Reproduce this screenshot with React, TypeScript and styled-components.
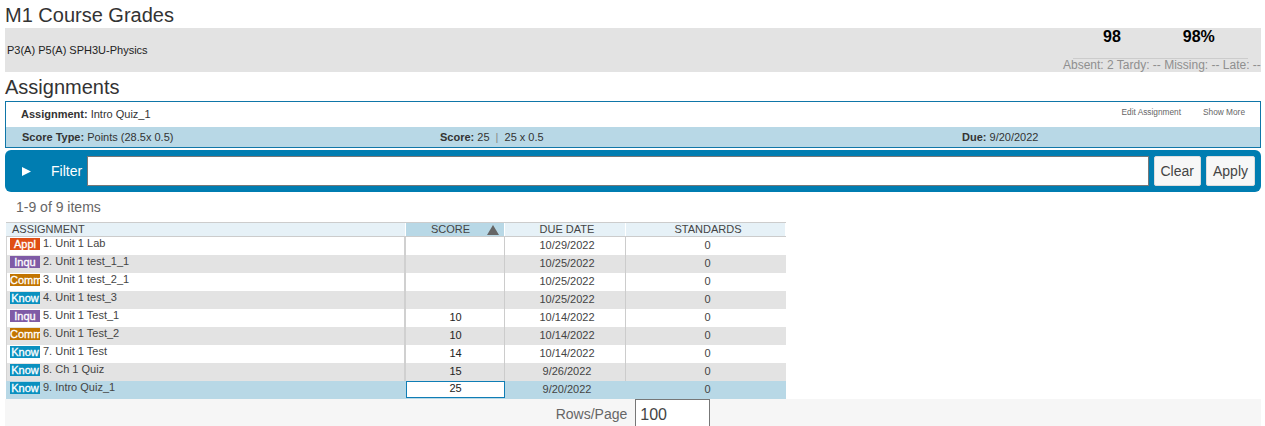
import React from 'react'
import styled, { createGlobalStyle } from 'styled-components'

type Category = 'Appl' | 'Inqu' | 'Comm' | 'Know'

interface Row {
  category: Category
  name: string
  score: string
  due: string
}

const rows: Row[] = [
  { category: 'Appl', name: '1. Unit 1 Lab', score: '', due: '10/29/2022' },
  { category: 'Inqu', name: '2. Unit 1 test_1_1', score: '', due: '10/25/2022' },
  { category: 'Comm', name: '3. Unit 1 test_2_1', score: '', due: '10/25/2022' },
  { category: 'Know', name: '4. Unit 1 test_3', score: '', due: '10/25/2022' },
  { category: 'Inqu', name: '5. Unit 1 Test_1', score: '10', due: '10/14/2022' },
  { category: 'Comm', name: '6. Unit 1 Test_2', score: '10', due: '10/14/2022' },
  { category: 'Know', name: '7. Unit 1 Test', score: '14', due: '10/14/2022' },
  { category: 'Know', name: '8. Ch 1 Quiz', score: '15', due: '9/26/2022' },
  { category: 'Know', name: '9. Intro Quiz_1', score: '25', due: '9/20/2022' }
]

const badgeColors: Record<Category, string> = {
  Appl: '#e04e14',
  Inqu: '#7f5ba6',
  Comm: '#c27400',
  Know: '#0a90bf'
}

const GlobalStyle = createGlobalStyle`
  html, body {
    margin: 0;
    padding: 0;
    background: #fff;
    overflow: hidden;
  }
  body {
    font-family: "Liberation Sans", Arial, sans-serif;
    color: #333;
  }
`

export default function App() {
  return (
    <Page>
      <GlobalStyle />
      <Heading>M1 Course Grades</Heading>
      <CourseBand>
        <CourseName>P3(A) P5(A) SPH3U-Physics</CourseName>
        <CourseGrades>
          <GradeNumbers>
            <span>98</span>
            <span>98%</span>
          </GradeNumbers>
          <Attendance>Absent: 2 Tardy: -- Missing: -- Late: --</Attendance>
        </CourseGrades>
      </CourseBand>
      <SubHeading>Assignments</SubHeading>
      <AssignmentBox>
        <AssignmentTop>
          <span>
            <b>Assignment:</b> Intro Quiz_1
          </span>
          <AssignmentLinks>
            <span>Edit Assignment</span>
            <span>Show More</span>
          </AssignmentLinks>
        </AssignmentTop>
        <AssignmentBottom>
          <span>
            <b>Score Type:</b> Points (28.5x 0.5)
          </span>
          <span>
            <b>Score:</b> 25 <Pipe>|</Pipe> 25 x 0.5
          </span>
          <span>
            <b>Due:</b> 9/20/2022
          </span>
        </AssignmentBottom>
      </AssignmentBox>
      <FilterBar>
        <svg width="9" height="9" viewBox="0 0 9 9">
          <polygon points="0,0 9,4.5 0,9" fill="#fff" />
        </svg>
        <FilterLabel>Filter</FilterLabel>
        <FilterInput type="text" />
        <FilterButton>Clear</FilterButton>
        <FilterButton>Apply</FilterButton>
      </FilterBar>
      <ItemCount>1-9 of 9 items</ItemCount>
      <Table>
        <HeadRow>
          <HeadCell $align="left">ASSIGNMENT</HeadCell>
          <HeadCell $sorted>
            SCORE
            <SortArrow width="12" height="10" viewBox="0 0 12 10">
              <polygon points="6,0 12,10 0,10" fill="#666" />
            </SortArrow>
          </HeadCell>
          <HeadCell $offset={4}>DUE DATE</HeadCell>
          <HeadCell $offset={5}>STANDARDS</HeadCell>
        </HeadRow>
        {rows.map((row, i) => {
          const selected = i === rows.length - 1
          return (
            <BodyRow key={row.name} $striped={i % 2 === 1} $selected={selected}>
              <NameCell $selected={selected}>
                <Badge $color={badgeColors[row.category]}>{row.category}</Badge>
                {row.name}
              </NameCell>
              {selected ? (
                <ScoreEdit>{row.score}</ScoreEdit>
              ) : (
                <ScoreCell>{row.score}</ScoreCell>
              )}
              <Cell $selected={selected}>{row.due}</Cell>
              <Cell $selected={selected} $last>
                0
              </Cell>
            </BodyRow>
          )
        })}
      </Table>
      <Pager>
        <PagerLabel>Rows/Page</PagerLabel>
        <PagerInput>100</PagerInput>
      </Pager>
    </Page>
  )
}

const Page = styled.div`
  box-sizing: border-box;
  width: 1265px;
  height: 426px;
  padding: 0 4px 0 5px;
  overflow: hidden;
`

const Heading = styled.h1`
  margin: 0;
  height: 28px;
  font-size: 20px;
  font-weight: 400;
  line-height: 30px;
  color: #333;
`

const CourseBand = styled.div`
  display: flex;
  justify-content: space-between;
  height: 44px;
  background: #e3e3e3;
`

const CourseName = styled.div`
  padding-left: 2px;
  font-size: 11px;
  line-height: 44px;
  color: #222;
`

const CourseGrades = styled.div`
  display: flex;
  flex-direction: column;
  width: 198px;
`

const GradeNumbers = styled.div`
  display: flex;
  box-sizing: border-box;
  height: 31px;
  margin: 0 13px 0 10px;
  padding-left: 30px;
  gap: 62px;
  border-bottom: 1px solid #ccc;
  font-size: 16px;
  font-weight: 700;
  line-height: 18px;
  color: #000;
`

const Attendance = styled.div`
  font-size: 12px;
  line-height: 13px;
  color: #8f8f8f;
  white-space: nowrap;
`

const SubHeading = styled.h2`
  margin: 0;
  height: 29px;
  font-size: 20px;
  font-weight: 400;
  line-height: 31px;
  color: #333;
`

const AssignmentBox = styled.div`
  box-sizing: border-box;
  height: 47px;
  border: 1px solid #0f76a8;
  font-size: 11px;
  color: #333;
`

const AssignmentTop = styled.div`
  display: flex;
  justify-content: space-between;
  align-items: center;
  box-sizing: border-box;
  height: 25px;
  padding: 0 15px 1px 15px;
`

const AssignmentLinks = styled.div`
  display: flex;
  gap: 22px;
  margin-bottom: 4px;
  font-size: 8.3px;
  color: #666;
`

const AssignmentBottom = styled.div`
  display: grid;
  grid-template-columns: 418px 522px 1fr;
  align-items: center;
  height: 20px;
  padding-left: 16px;
  background: #b8d8e6;
`

const Pipe = styled.span`
  margin: 0 3px;
  color: #888;
`

const FilterBar = styled.div`
  display: flex;
  align-items: center;
  box-sizing: border-box;
  height: 42px;
  margin-top: 2px;
  padding: 0 6px 0 17px;
  border-radius: 6px;
  background: #007db1;
`

const FilterLabel = styled.span`
  margin: 0 5px 0 20px;
  font-size: 14px;
  color: #fff;
`

const FilterInput = styled.input`
  box-sizing: border-box;
  flex: 1;
  height: 30px;
  margin-right: 5px;
  border: 1px solid #777;
  background: #fff;
  outline: none;
`

const FilterButton = styled.button`
  box-sizing: border-box;
  height: 30px;
  padding: 0 6px;
  border: 1px solid #ddd;
  border-radius: 2px;
  background: #f7f7f7;
  font-family: inherit;
  font-size: 14px;
  color: #444;

  & + & {
    margin-left: 5px;
  }
`

const ItemCount = styled.div`
  height: 30px;
  padding-left: 11px;
  font-size: 14px;
  line-height: 30px;
  color: #666;
`

const Table = styled.div`
  width: 780px;
  margin-left: 1px;
`

const gridColumns = '400px 99px 121px 160px'

const HeadRow = styled.div`
  display: grid;
  grid-template-columns: ${gridColumns};
  box-sizing: border-box;
  height: 15px;
  border-top: 1px solid #ccc;
  border-bottom: 1px solid #ccc;
`

const HeadCell = styled.div<{ $align?: string; $sorted?: boolean; $offset?: number }>`
  position: relative;
  padding-left: ${p => (p.$align === 'left' ? '6px' : `${p.$offset ?? 0}px`)};
  padding-right: ${p => (p.$sorted ? '9px' : '0')};
  border-right: 1px solid #fff;
  background: ${p => (p.$sorted ? '#b8d8e6' : '#e6f1f7')};
  font-size: 11px;
  line-height: 13px;
  text-align: ${p => p.$align ?? 'center'};
  color: #444;
`

const SortArrow = styled.svg`
  position: absolute;
  top: 2px;
  right: 5px;
`

const BodyRow = styled.div<{ $striped: boolean; $selected: boolean }>`
  display: grid;
  grid-template-columns: ${gridColumns};
  height: 18px;
  background: ${p =>
    p.$selected ? '#b8d8e6' : p.$striped ? '#e3e3e3' : '#fff'};
`

const NameCell = styled.div<{ $selected: boolean }>`
  display: flex;
  align-items: flex-start;
  padding: 1px 0 0 3px;
  border-left: 1px solid ${p => (p.$selected ? 'transparent' : '#d4d4d4')};
  border-right: 2px solid ${p => (p.$selected ? 'transparent' : '#d0d0d0')};
  font-size: 11px;
  line-height: 11px;
  color: #444;
`

const Badge = styled.span<{ $color: string }>`
  flex: none;
  box-sizing: border-box;
  width: 30px;
  height: 12px;
  margin-right: 3px;
  overflow: hidden;
  background: ${p => p.$color};
  font-size: 11px;
  line-height: 12px;
  text-align: center;
  white-space: nowrap;
  color: #fff;
  -webkit-text-stroke: 0.3px #fff;
`

const ScoreCell = styled.div`
  padding-left: 1px;
  border-right: 1px solid #ccc;
  font-size: 11px;
  line-height: 17px;
  text-align: center;
  color: #222;
`

const ScoreEdit = styled.div`
  box-sizing: border-box;
  height: 17px;
  border: 1px solid #0f7db5;
  background: #fff;
  font-size: 11px;
  line-height: 12px;
  text-align: center;
  color: #222;
`

const Cell = styled.div<{ $selected: boolean; $last?: boolean }>`
  padding-left: 4px;
  border-right: 1px solid ${p => (p.$last || p.$selected ? 'transparent' : '#ccc')};
  font-size: 11px;
  line-height: 17px;
  text-align: center;
  color: #444;
`

const Pager = styled.div`
  display: flex;
  justify-content: center;
  gap: 8px;
  height: 27px;
  background: #f6f6f6;
`

const PagerLabel = styled.span`
  font-size: 14px;
  line-height: 30px;
  color: #666;
`

const PagerInput = styled.div`
  box-sizing: border-box;
  width: 75px;
  height: 30px;
  padding-left: 4px;
  border: 1px solid #777;
  background: #fff;
  font-size: 16px;
  line-height: 29px;
  color: #444;
`
